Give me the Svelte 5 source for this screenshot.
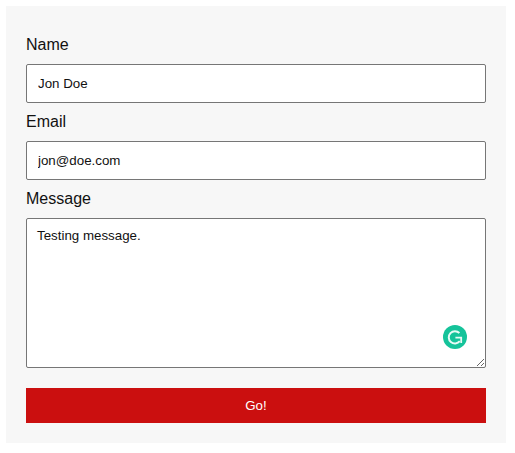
<script>
  let name = $state('Jon Doe');
  let email = $state('jon@doe.com');
  let message = $state('Testing message.');
</script>

<div class="page">
  <form class="panel" onsubmit={(e) => e.preventDefault()}>
    <label for="name">Name</label>
    <input id="name" type="text" bind:value={name} />

    <label for="email">Email</label>
    <input id="email" type="email" bind:value={email} />

    <label for="message">Message</label>
    <div class="area-wrap">
      <textarea id="message" bind:value={message}></textarea>
      <span class="grammarly">
        <svg viewBox="0 0 24 24" width="24" height="24">
          <circle cx="12" cy="12" r="12" fill="#15c39a" />
          <path d="M16.4 8A6.2 6.2 0 1 0 16.8 16.2" fill="none" stroke="#e8fbf6" stroke-width="2" />
          <path d="M12.4 12.6H18.2V18" fill="none" stroke="#e8fbf6" stroke-width="1.8" />
        </svg>
      </span>
    </div>

    <button type="submit">Go!</button>
  </form>
</div>

<style>
  :global(body) { background: #fff; }
  .page { padding: 6px 9px 10px 6px; font-family: "Liberation Sans", Arial, sans-serif; }
  .panel { display: flex; flex-direction: column; padding: 30px 20px 20px; background: #f7f7f7; }
  label { display: block; height: 18px; line-height: 18px; font-size: 16px; color: #111; margin-bottom: 10px; }
  input, textarea { display: block; box-sizing: border-box; width: 100%; margin: 0; background: #fff; color: #111; border: 1px solid #767676; border-radius: 2px; font-family: "Liberation Sans", Arial, sans-serif; font-size: 13.33px; outline: none; }
  input { height: 39px; padding: 0 11px; margin-bottom: 10px; }
  .area-wrap { position: relative; }
  textarea { height: 150px; padding: 9px 10px; line-height: 16px; resize: vertical; }
  .grammarly { position: absolute; right: 19px; bottom: 19px; width: 24px; height: 24px; line-height: 0; }
  button { display: block; width: 100%; height: 35px; margin-top: 20px; padding: 0; border: 0; background: #cb0f0f; color: #fff; font-family: "Liberation Sans", Arial, sans-serif; font-size: 13.33px; }
</style>
